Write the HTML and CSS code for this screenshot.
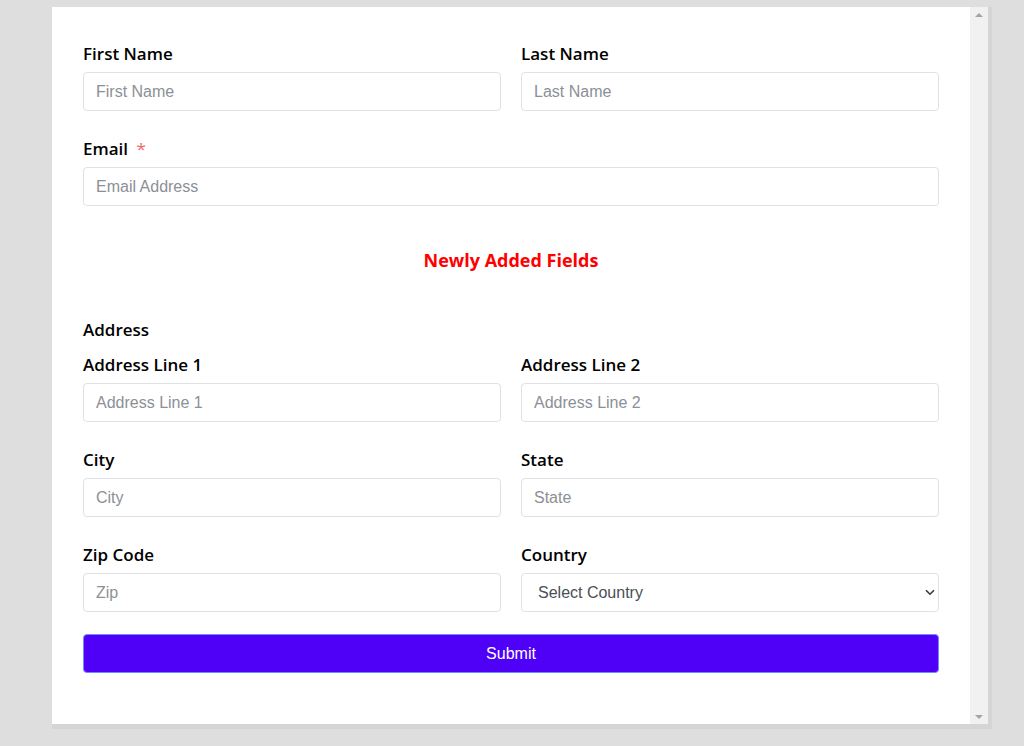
FILE: index.html
```html
<!DOCTYPE html>
<html lang="en">
<head>
<meta charset="utf-8">
<title>Form</title>
<link rel="stylesheet" href="styles.css">
</head>
<body>
<div class="panel">
  <form class="content">
    <div class="row">
      <div class="field">
        <label class="label">First Name</label>
        <input class="input" type="text" placeholder="First Name">
      </div>
      <div class="field">
        <label class="label">Last Name</label>
        <input class="input" type="text" placeholder="Last Name">
      </div>
    </div>
    <div class="field">
      <label class="label">Email <span class="req">*</span></label>
      <input class="input" type="email" placeholder="Email Address">
    </div>
    <h3 class="section-title">Newly Added Fields</h3>
    <div class="group-label">Address</div>
    <div class="row">
      <div class="field">
        <label class="label">Address Line 1</label>
        <input class="input" type="text" placeholder="Address Line 1">
      </div>
      <div class="field">
        <label class="label">Address Line 2</label>
        <input class="input" type="text" placeholder="Address Line 2">
      </div>
    </div>
    <div class="row">
      <div class="field">
        <label class="label">City</label>
        <input class="input" type="text" placeholder="City">
      </div>
      <div class="field">
        <label class="label">State</label>
        <input class="input" type="text" placeholder="State">
      </div>
    </div>
    <div class="row">
      <div class="field">
        <label class="label">Zip Code</label>
        <input class="input" type="text" placeholder="Zip">
      </div>
      <div class="field">
        <label class="label">Country</label>
        <div class="select-wrap">
          <select class="input select">
            <option>Select Country</option>
          </select>
          <svg class="chevron" width="10" height="7" viewBox="0 0 10 7"><path d="M1 1.2 L5 5.2 L9 1.2" fill="none" stroke="#343a40" stroke-width="1.6"/></svg>
        </div>
      </div>
    </div>
    <button class="submit" type="button">Submit</button>
  </form>
  <div class="scrollbar">
    <span class="arrow up"></span>
    <span class="arrow down"></span>
  </div>
</div>
</body>
</html>
```
FILE: styles.css
```css
* { box-sizing: border-box; }
html, body { margin: 0; padding: 0; }
body {
  background: #dedede;
  padding: 7px 0 0 52px;
  height: 746px;
  overflow: hidden;
}
.panel {
  width: 940px;
  height: 722px;
  background: #fff;
  display: flex;
  border-right: 4px solid #d5d5d5;
  border-bottom: 5px solid #d5d5d5;
}
.content {
  flex: 1;
  padding: 33px 31px 0 31px;
  font-family: "Open Sans", "Noto Sans", sans-serif;
  color: #000;
}
.row {
  display: flex;
  gap: 20px;
}
.row .field { flex: 1; }
.field {
  display: flex;
  flex-direction: column;
  margin-bottom: 24px;
}
.label {
  font-size: 17px;
  font-weight: 600;
  line-height: 27px;
  margin-bottom: 5px;
}
.req {
  color: #f26666;
  font-weight: 400;
  margin-left: 4px;
}
.input {
  height: 39px;
  border: 1px solid #dfe1e5;
  border-radius: 4px;
  padding: 0 12px;
  font-family: "Liberation Sans", Arial, sans-serif;
  font-size: 16px;
  color: #495057;
  background: #fff;
  outline: none;
  width: 100%;
}
.input::placeholder { color: #8c9096; }
.select-wrap { position: relative; }
.select {
  appearance: none;
  -webkit-appearance: none;
  padding-left: 16px;
  color: #4b4f56;
}
.chevron {
  position: absolute;
  right: 4px;
  top: 16px;
}
.section-title {
  margin: 41px 0 0;
  text-align: center;
  color: #ff0000;
  font-size: 18px;
  font-weight: 700;
  line-height: 27px;
}
.group-label {
  margin-top: 42px;
  font-size: 17px;
  font-weight: 600;
  line-height: 27px;
  margin-bottom: 8px;
}
.submit {
  display: block;
  width: 100%;
  height: 39px;
  margin-top: -2px;
  background: #4f00f7;
  border: 1px solid #6d8cff;
  border-radius: 4px;
  color: #fff;
  font-family: "Liberation Sans", Arial, sans-serif;
  font-size: 16px;
}
.scrollbar {
  width: 18px;
  background: #f1f1f1;
  position: relative;
}
.arrow {
  position: absolute;
  left: 5px;
  width: 0;
  height: 0;
  border-left: 4px solid transparent;
  border-right: 4px solid transparent;
}
.arrow.up { top: 6px; border-bottom: 4px solid #a3a3a3; }
.arrow.down { bottom: 5px; border-top: 4px solid #a3a3a3; }
```
